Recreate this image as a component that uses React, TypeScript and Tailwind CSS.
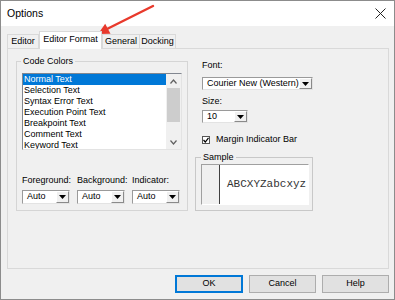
import React from 'react'

const items = [
  'Normal Text',
  'Selection Text',
  'Syntax Error Text',
  'Execution Point Text',
  'Breakpoint Text',
  'Comment Text',
  'Keyword Text',
]

function Tri() {
  return (
    <svg width="7" height="4" viewBox="0 0 7 4">
      <path d="M0 0h7L3.5 4z" fill="#000" />
    </svg>
  )
}

function Combo({ value, className }: { value: string; className: string }) {
  return (
    <div
      className={`flex border border-t-[#9a9a9a] border-l-[#9a9a9a] border-r-[#e3e3e3] border-b-[#e3e3e3] bg-white ${className}`}
    >
      <span className="flex-1 pl-[4px] text-[9px] leading-[11px] whitespace-nowrap">{value}</span>
      <span className="flex w-[13px] items-center justify-center border border-t-white border-l-white border-r-[#8a8a8a] border-b-[#8a8a8a] bg-[#f0f0f0]">
        <Tri />
      </span>
    </div>
  )
}

function Tab({ label, active, className }: { label: string; active?: boolean; className: string }) {
  if (active) {
    return (
      <div
        className={`relative z-10 flex h-[18px] items-start justify-center border border-b-0 border-[#d9d9d9] bg-white pt-[2px] text-[9px] leading-[11px] ${className}`}
      >
        {label}
      </div>
    )
  }
  return (
    <div
      className={`mt-[3px] flex h-[14px] items-start justify-center border border-b-0 border-[#d9d9d9] bg-[#f0f0f0] pt-[1px] text-[9px] leading-[11px] ${className}`}
    >
      {label}
    </div>
  )
}

export default function App() {
  return (
    <div className="relative flex h-[300px] w-[395px] flex-col border border-[#8c8c8c] bg-[#f0f0f0] font-['Liberation_Sans',Arial,sans-serif] text-black">
      {/* title bar */}
      <div className="flex h-[25px] shrink-0 items-center justify-between bg-white pl-[6px] pr-[8px]">
        <span className="text-[10.5px]">Options</span>
        <svg width="11" height="11" viewBox="0 0 11 11">
          <path d="M0.5 0.5l10 10M10.5 0.5l-10 10" stroke="#222" strokeWidth="1" />
        </svg>
      </div>

      {/* tabs */}
      <div className="ml-[6px] mt-[5px] flex -mb-[1px]">
        <Tab label="Editor" className="w-[32px]" />
        <Tab label="Editor Format" active className="w-[63px]" />
        <Tab label="General" className="w-[38px]" />
        <Tab label="Docking" className="w-[36px] border-l-0" />
      </div>

      {/* tab page */}
      <div className="ml-[6px] mr-[5px] flex h-[221px] items-start border border-[#d9d9d9] pl-[8px] pt-[7px]">
        {/* Code Colors */}
        <fieldset className="w-[172px] border border-[#d5d5d5] pb-[6px]">
          <legend className="ml-[4px] px-[2px] text-[9px] leading-[11px]">Code Colors</legend>
          <div className="ml-[5px] mt-[6px] flex h-[77px] w-[160px] border border-t-[#828790] border-l-[#828790] border-r-[#e3e3e3] border-b-[#e3e3e3] bg-white">
            <div className="flex-1 overflow-hidden">
              {items.map((t, i) => (
                <div
                  key={t}
                  className={
                    i === 0
                      ? 'h-[11px] bg-[#0078d7] pl-[1px] text-[9px] leading-[11px] text-white'
                      : 'h-[11px] pl-[1px] text-[9px] leading-[11px]'
                  }
                >
                  {t}
                </div>
              ))}
            </div>
            <div className="flex w-[15px] flex-col items-center bg-[#f0f0f0]">
              <div className="flex h-[14px] w-full items-center justify-center">
                <svg width="7" height="5" viewBox="0 0 7 5">
                  <path d="M0.5 4.5l3-3.5 3 3.5" fill="none" stroke="#606060" strokeWidth="1.2" />
                </svg>
              </div>
              <div className="h-[34px] w-[13px] bg-[#cdcdcd]" />
              <div className="flex-1" />
              <div className="flex h-[14px] w-full items-center justify-center">
                <svg width="7" height="5" viewBox="0 0 7 5">
                  <path d="M0.5 0.5l3 3.5 3-3.5" fill="none" stroke="#606060" strokeWidth="1.2" />
                </svg>
              </div>
            </div>
          </div>
          <div className="ml-[5px] mt-[25px] flex gap-[7px]">
            <div className="flex w-[48px] flex-col">
              <span className="text-[9px] leading-[11px] whitespace-nowrap">Foreground:</span>
              <Combo value="Auto" className="mt-[4px] h-[14px] w-[48px]" />
            </div>
            <div className="flex w-[48px] flex-col">
              <span className="text-[9px] leading-[11px] whitespace-nowrap">Background:</span>
              <Combo value="Auto" className="mt-[4px] h-[14px] w-[48px]" />
            </div>
            <div className="flex w-[48px] flex-col">
              <span className="text-[9px] leading-[11px] whitespace-nowrap">Indicator:</span>
              <Combo value="Auto" className="mt-[4px] h-[14px] w-[48px]" />
            </div>
          </div>
        </fieldset>

        {/* right column */}
        <div className="ml-[7px] flex w-[118px] flex-col">
          <div className="flex flex-col pl-[7px]">
            <span className="mt-[4px] text-[9px] leading-[11px]">Font:</span>
            <Combo value="Courier New (Western)" className="mt-[6px] h-[13px] w-[111px]" />
            <span className="mt-[6px] text-[9px] leading-[11px]">Size:</span>
            <Combo value="10" className="mt-[3px] h-[13px] w-[46px]" />
            <div className="mt-[11px] flex h-[11px] items-center gap-[6px]">
              <span className="flex h-[8px] w-[8px] items-center justify-center border border-[#555] bg-white">
                <svg width="6" height="6" viewBox="0 0 6 6">
                  <path d="M0.5 3l1.8 2L5.5 0.8" fill="none" stroke="#000" strokeWidth="1.2" />
                </svg>
              </span>
              <span className="text-[9px] leading-[11px] whitespace-nowrap">Margin Indicator Bar</span>
            </div>
          </div>
          <fieldset className="mt-[7px] w-[118px] border border-[#c8c8c8] pb-[5px]">
            <legend className="ml-[5px] px-[2px] text-[9px] leading-[11px]">Sample</legend>
            <div className="ml-[5px] mt-[1px] flex h-[41px] w-[108px] border border-t-[#a0a0a0] border-l-[#a0a0a0] border-r-white border-b-white bg-white">
              <div className="w-[18px] border-r border-[#404040] bg-[#f0f0f0]" />
              <div className="flex items-center pl-[7px] font-['Liberation_Mono',monospace] text-[11px] text-[#333]">
                ABCXYZabcxyz
              </div>
            </div>
          </fieldset>
        </div>
      </div>

      {/* buttons */}
      <div className="mt-[6px] flex justify-end gap-[6px] pr-[5px]">
        <button className="h-[18px] w-[68px] border border-[#0078d7] bg-[#e1e1e1] text-[9px] shadow-[inset_0_0_0_1px_#0078d7]">
          OK
        </button>
        <button className="h-[18px] w-[67px] border border-[#adadad] bg-[#e1e1e1] text-[9px]">Cancel</button>
        <button className="h-[18px] w-[67px] border border-[#adadad] bg-[#e1e1e1] text-[9px]">Help</button>
      </div>

      {/* annotation arrow */}
      <svg className="pointer-events-none absolute left-0 top-0" width="395" height="60" viewBox="0 0 395 60">
        <path d="M152 5L104 29" stroke="#e8392c" strokeWidth="2.4" strokeLinecap="round" />
        <path d="M97 33L109.5 32.8L104.2 22.8z" fill="#e8392c" />
      </svg>
    </div>
  )
}
